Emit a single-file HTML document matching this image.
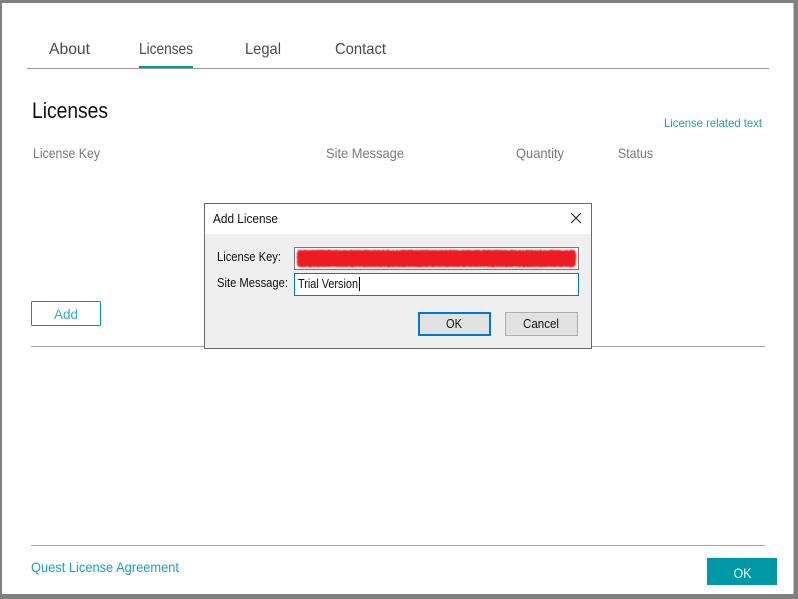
<!DOCTYPE html>
<html><head><meta charset="utf-8"><style>
html,body{margin:0;padding:0;background:#808080;width:798px;height:599px;overflow:hidden}
svg{display:block}
text{font-family:"Liberation Sans",sans-serif}
</style></head><body>
<svg width="798" height="599" viewBox="0 0 798 599" xmlns="http://www.w3.org/2000/svg">
<defs>
<filter id="b" x="-3%" y="-30%" width="106%" height="160%"><feTurbulence type="fractalNoise" baseFrequency="0.7" numOctaves="2" seed="3" result="n"/><feDisplacementMap in="SourceGraphic" in2="n" scale="2" result="d"/><feGaussianBlur in="d" stdDeviation="0.9"/></filter>
</defs>
<rect width="798" height="599" fill="#808080"/>
<rect x="2" y="3" width="791.500" height="591" fill="#fff"/>

<g font-size="16" fill="#4a4a4a">
<text x="49" y="54" textLength="41" lengthAdjust="spacingAndGlyphs">About</text>
<text x="139" y="54" textLength="54" lengthAdjust="spacingAndGlyphs">Licenses</text>
<text x="245" y="54" textLength="36" lengthAdjust="spacingAndGlyphs">Legal</text>
<text x="335" y="54" textLength="51" lengthAdjust="spacingAndGlyphs">Contact</text>
</g>
<rect x="27" y="68" width="742" height="1" fill="#999"/>
<rect x="139" y="66" width="54" height="2" fill="#0097a7"/>

<text x="32" y="118" font-size="22" fill="#111" textLength="76" lengthAdjust="spacingAndGlyphs">Licenses</text>
<text x="664" y="127" font-size="12" fill="#1ba3b5" textLength="98" lengthAdjust="spacingAndGlyphs">License related text</text>

<g font-size="14" fill="#7a7a7a">
<text x="33" y="158" textLength="67" lengthAdjust="spacingAndGlyphs">License Key</text>
<text x="326" y="158" textLength="78" lengthAdjust="spacingAndGlyphs">Site Message</text>
<text x="516" y="158" textLength="48" lengthAdjust="spacingAndGlyphs">Quantity</text>
<text x="618" y="158" textLength="35" lengthAdjust="spacingAndGlyphs">Status</text>
</g>

<rect x="31.500" y="301.500" width="69" height="24" rx="1" fill="#fff" stroke="#0097a7"/>
<text x="54" y="319" font-size="14" fill="#35aec0" textLength="24" lengthAdjust="spacingAndGlyphs">Add</text>
<rect x="31" y="346" width="734" height="1" fill="#a6a6a6"/>

<rect x="31" y="545" width="734" height="1" fill="#a6a6a6"/>
<text x="31" y="572" font-size="14" fill="#1ba3b5" textLength="148" lengthAdjust="spacingAndGlyphs">Quest License Agreement</text>
<rect x="707" y="558" width="70" height="27" fill="#0097a7"/>
<text x="733.500" y="578" font-size="14" fill="#e8fbfd" textLength="18" lengthAdjust="spacingAndGlyphs">OK</text>

<!-- dialog -->
<rect x="204.500" y="203.500" width="387" height="145" fill="#efefef" stroke="#6a6a6a"/>
<rect x="205" y="204" width="386" height="30" fill="#fff"/>
<text x="213" y="223" font-size="12.500" fill="#111" textLength="65" lengthAdjust="spacingAndGlyphs">Add License</text>
<path d="M571 213L581 223M581 213L571 223" stroke="#222" stroke-width="1.100" fill="none"/>

<g font-size="12.500" fill="#111">
<text x="217" y="261" textLength="64" lengthAdjust="spacingAndGlyphs">License Key:</text>
<text x="217" y="287" textLength="71" lengthAdjust="spacingAndGlyphs">Site Message:</text>
</g>
<rect x="294.500" y="247.500" width="284" height="22" fill="#fff" stroke="#7a7a7a"/>
<rect x="297" y="250" width="279" height="17" rx="3" fill="#ed1c24" filter="url(#b)"/>
<rect x="294.500" y="273.500" width="284" height="22" fill="#fff" stroke="#0078d7"/>
<text x="298" y="288" font-size="13" fill="#111" textLength="60" lengthAdjust="spacingAndGlyphs">Trial Version</text>
<rect x="359" y="277" width="1" height="14" fill="#000"/>

<rect x="419" y="313" width="71" height="22" fill="#e1e1e1" stroke="#0078d7" stroke-width="2"/>
<text x="446" y="328" font-size="13" fill="#111" textLength="16" lengthAdjust="spacingAndGlyphs">OK</text>
<rect x="505.500" y="312.500" width="72" height="23" fill="#e1e1e1" stroke="#adadad"/>
<text x="523" y="328" font-size="13" fill="#111" textLength="36" lengthAdjust="spacingAndGlyphs">Cancel</text>
</svg>
</body></html>
